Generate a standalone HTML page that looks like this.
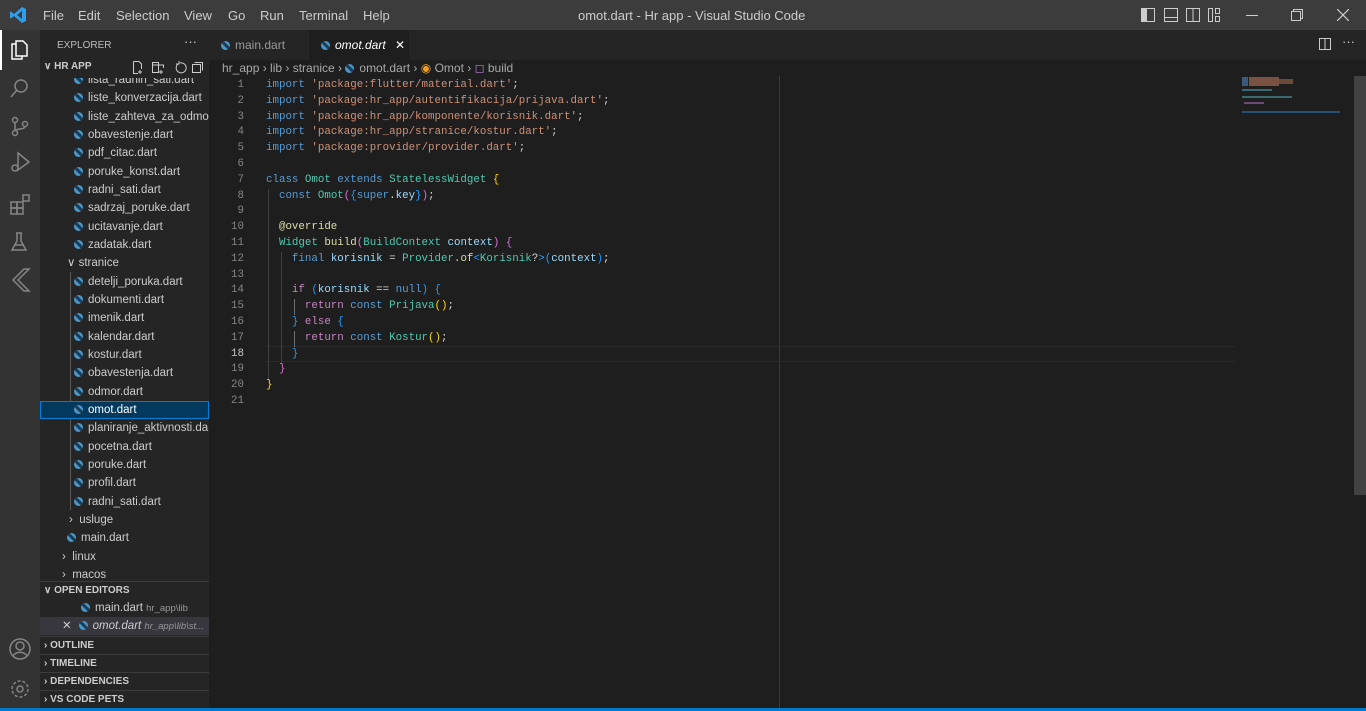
<!DOCTYPE html>
<html><head><meta charset="utf-8">
<style>
*{margin:0;padding:0;box-sizing:border-box}
body{width:1366px;height:711px;overflow:hidden;background:#1e1e1e;font-family:"Liberation Sans",sans-serif;color:#ccc;position:relative}
.abs{position:absolute}
#title{left:0;top:0;width:1366px;height:30px;background:#3c3c3c}
#title .m{position:absolute;top:8px;font-size:13px;color:#ccc}
#act{left:0;top:30px;width:40px;height:678px;background:#333}
#side{left:40px;top:30px;width:169px;height:678px;background:#252526;font-size:11.5px}
.row{position:absolute;left:0;width:169px;height:18px;line-height:18px;color:#ccc;white-space:nowrap;overflow:hidden}
.di{display:inline-block;width:9px;height:9px;border-radius:50%;background:#4b97c9;vertical-align:-1px;margin-right:5px;position:relative;overflow:hidden}
.di:after{content:"";position:absolute;left:3px;top:-2px;width:3px;height:12px;background:#1d3d55;transform:rotate(-45deg)}
.hdr{position:absolute;left:0;width:169px;height:18px;line-height:18px;font-size:10px;font-weight:bold;color:#ccc;border-top:1px solid #3c3c3c;padding-left:4px}
#tabs{left:209px;top:30px;width:1157px;height:30px;background:#252526}
.tab{position:absolute;top:0;height:30px;line-height:30px;font-size:12px;padding-left:12px}
#bc{left:209px;top:60px;width:1157px;height:16px;font-size:12px;color:#a9a9a9;line-height:16px}
#code{left:209px;top:77px;font-family:"Liberation Mono",monospace;font-size:10.8px}
.ln{position:absolute;left:0;width:35px;text-align:right;color:#858585;height:16px;line-height:16px}
.cl{position:absolute;left:57px;white-space:pre;height:16px;line-height:16px;color:#d4d4d4}
.k{color:#569cd6}.s{color:#ce9178}.t{color:#4ec9b0}.f{color:#dcdcaa}.v{color:#9cdcfe}.c{color:#c586c0}
.b1{color:#ffd700}.b2{color:#da70d6}.b3{color:#179fff}
</style></head><body>
<div id="title" class="abs">
 <svg class="abs" style="left:9px;top:6px" width="18" height="18" viewBox="0 0 18 18"><path d="M13 1 L17 3 V15 L13 17 L5 10 L2 12.5 L1 12 V6 L2 5.5 L5 8 Z M13 5 L8 9 L13 13 Z" fill="#2f9ee8"/></svg>
 <span class="m" style="left:43px">File</span><span class="m" style="left:78px">Edit</span><span class="m" style="left:116px">Selection</span><span class="m" style="left:184px">View</span><span class="m" style="left:228px">Go</span><span class="m" style="left:260px">Run</span><span class="m" style="left:299px">Terminal</span><span class="m" style="left:363px">Help</span>
 <span class="m" style="left:578px">omot.dart - Hr app - Visual Studio Code</span>
 <svg class="abs" style="left:1140px;top:8px" width="95" height="14" viewBox="0 0 95 14" fill="none" stroke="#ccc" stroke-width="1"><rect x="1.5" y="0.5" width="13" height="13"/><rect x="1.5" y="0.5" width="5" height="13" fill="#ccc"/><rect x="24.5" y="0.5" width="13" height="13"/><line x1="24" y1="9.5" x2="38" y2="9.5"/><rect x="46.5" y="0.5" width="13" height="13"/><line x1="53" y1="0" x2="53" y2="14"/><rect x="68.5" y="0.5" width="4" height="13"/><rect x="75.5" y="0.5" width="4" height="5"/><rect x="75.5" y="8.5" width="4" height="5"/></svg>
 <div class="abs" style="left:1246px;top:15px;width:12px;height:1px;background:#ccc"></div>
 <svg class="abs" style="left:1291px;top:9px" width="12" height="12" fill="none" stroke="#ccc"><rect x="0.5" y="2.5" width="9" height="9"/><path d="M2.5 2.5V0.5H11.5V9.5H9.5"/></svg>
 <svg class="abs" style="left:1337px;top:9px" width="12" height="12" stroke="#ccc" stroke-width="1.2"><path d="M0 0L12 12M12 0L0 12"/></svg>
</div>
<div id="act" class="abs">
 <div class="abs" style="left:0;top:0;width:2px;height:40px;background:#fff"></div>
 <svg class="abs" style="left:8px;top:6px" width="24" height="260" fill="none" stroke="#858585" stroke-width="1.5">
  <g stroke="#fff"><path d="M8 5H15L19 9V20H8Z"/><path d="M8 8H4V23H14V20"/></g>
  <circle cx="13" cy="50" r="6"/><path d="M9 54L3 61"/>
  <circle cx="7" cy="84" r="2.5"/><circle cx="7" cy="97" r="2.5"/><circle cx="17" cy="88" r="2.5"/><path d="M7 86.5V94.5M17 90.5C17 94 8 92 7 95"/>
  <path d="M10 117L21 126L10 134Z"/><circle cx="7" cy="132" r="3"/>
  <rect x="3" y="166" width="6" height="6"/><rect x="9" y="166" width="6" height="6"/><rect x="3" y="172" width="6" height="6"/><rect x="9" y="172" width="6" height="6"/><rect x="15" y="159" width="6" height="6"/>
  <path d="M9 197V205L4 214H18L13 205V197M8 197H14M6 209H16"/>
  <path d="M16 233L5 244L16 255H21L10 244L21 233Z M13 247L17 251"/>
 </svg>
 <svg class="abs" style="left:8px;top:608px" width="24" height="70" fill="none" stroke="#858585" stroke-width="1.5">
  <circle cx="12" cy="11" r="10"/><circle cx="12" cy="8" r="4"/><path d="M5 18C8 13 16 13 19 18"/>
  <circle cx="12" cy="51" r="3"/><circle cx="12" cy="51" r="8" stroke-dasharray="3 2"/>
 </svg>
</div>
<div id="side" class="abs">
 <div class="abs" style="left:17px;top:10px;font-size:10px;color:#bbb">EXPLORER</div>
 <div class="abs" style="left:144px;top:4px;font-size:13px;color:#ccc">···</div>
 <div class="abs" style="left:4px;top:31px;font-size:10px;font-weight:bold;color:#ccc">&#8744; HR APP</div>
 <svg class="abs" style="left:92px;top:31px" width="72" height="13" fill="none" stroke="#ccc"><path d="M1.5 0.5H7L9.5 3V8M1.5 0.5V12.5H6M8 9V13M6 11H10"/><path d="M20.5 1.5H26.5V11.5H20.5Z M20.5 4H31.5V7M29 9V13M27 11H31"/><path d="M46 3A5 5 0 1 0 48 2M47 0V3H44"/><rect x="60.5" y="3.5" width="8" height="8"/><path d="M62.5 1.5H70.5V9.5"/></svg>
 <div class="abs" style="left:0;top:48px;width:169px;height:503px;overflow:hidden">
  <div class="row" style="top:-7px;padding-left:34px"><span class="di"></span>lista_radnih_sati.dart</div>
  <div class="row" style="top:11.3px;padding-left:34px"><span class="di"></span>liste_konverzacija.dart</div>
  <div class="row" style="top:29.7px;padding-left:34px"><span class="di"></span>liste_zahteva_za_odmor...</div>
  <div class="row" style="top:48px;padding-left:34px"><span class="di"></span>obavestenje.dart</div>
  <div class="row" style="top:66.3px;padding-left:34px"><span class="di"></span>pdf_citac.dart</div>
  <div class="row" style="top:84.7px;padding-left:34px"><span class="di"></span>poruke_konst.dart</div>
  <div class="row" style="top:103px;padding-left:34px"><span class="di"></span>radni_sati.dart</div>
  <div class="row" style="top:121.3px;padding-left:34px"><span class="di"></span>sadrzaj_poruke.dart</div>
  <div class="row" style="top:139.7px;padding-left:34px"><span class="di"></span>ucitavanje.dart</div>
  <div class="row" style="top:158px;padding-left:34px"><span class="di"></span>zadatak.dart</div>
  <div class="row" style="top:176.3px;padding-left:27px">&#8744; stranice</div>
  <div class="abs" style="left:30px;top:194px;width:1px;height:238px;background:#585858"></div>
  <div class="row" style="top:194.7px;padding-left:34px"><span class="di"></span>detelji_poruka.dart</div>
  <div class="row" style="top:213px;padding-left:34px"><span class="di"></span>dokumenti.dart</div>
  <div class="row" style="top:231.3px;padding-left:34px"><span class="di"></span>imenik.dart</div>
  <div class="row" style="top:249.7px;padding-left:34px"><span class="di"></span>kalendar.dart</div>
  <div class="row" style="top:268px;padding-left:34px"><span class="di"></span>kostur.dart</div>
  <div class="row" style="top:286.3px;padding-left:34px"><span class="di"></span>obavestenja.dart</div>
  <div class="row" style="top:304.7px;padding-left:34px"><span class="di"></span>odmor.dart</div>
  <div class="row" style="top:323px;padding-left:33px;background:#04395e;border:1px solid #007fd4;line-height:16px;color:#fff"><span class="di"></span>omot.dart</div>
  <div class="row" style="top:341.3px;padding-left:34px"><span class="di"></span>planiranje_aktivnosti.dart</div>
  <div class="row" style="top:359.7px;padding-left:34px"><span class="di"></span>pocetna.dart</div>
  <div class="row" style="top:378px;padding-left:34px"><span class="di"></span>poruke.dart</div>
  <div class="row" style="top:396.3px;padding-left:34px"><span class="di"></span>profil.dart</div>
  <div class="row" style="top:414.7px;padding-left:34px"><span class="di"></span>radni_sati.dart</div>
  <div class="row" style="top:433px;padding-left:29px">&#8250;&nbsp; usluge</div>
  <div class="row" style="top:451.3px;padding-left:27px"><span class="di"></span>main.dart</div>
  <div class="row" style="top:469.7px;padding-left:22px">&#8250;&nbsp; linux</div>
  <div class="row" style="top:488px;padding-left:22px">&#8250;&nbsp; macos</div>
 </div>
 <div class="hdr" style="top:551px">&#8744; OPEN EDITORS</div>
 <div class="row" style="top:569px;padding-left:41px"><span class="di"></span>main.dart <span style="font-size:9.5px;color:#999">hr_app\lib</span></div>
 <div class="row" style="top:587px;padding-left:22px;background:#37373d"><span style="margin-right:7px">✕</span><span class="di"></span><i>omot.dart</i> <span style="font-size:9.5px;color:#999;font-style:italic">hr_app\lib\st...</span></div>
 <div class="hdr" style="top:606px">&#8250; OUTLINE</div>
 <div class="hdr" style="top:624px">&#8250; TIMELINE</div>
 <div class="hdr" style="top:642px">&#8250; DEPENDENCIES</div>
 <div class="hdr" style="top:660px">&#8250; VS CODE PETS</div>
</div>
<div id="tabs" class="abs">
 <div class="tab" style="left:0;width:100px;color:#999"><span class="di"></span>main.dart</div>
 <div class="tab" style="left:100px;width:100px;background:#1e1e1e;color:#fff;font-style:italic"><span class="di"></span>omot.dart <span style="font-style:normal;margin-left:6px">✕</span></div>
 <svg class="abs" style="left:1110px;top:8px" width="12" height="12" fill="none" stroke="#ccc"><rect x="0.5" y="0.5" width="11" height="11"/><line x1="6" y1="0" x2="6" y2="12"/></svg>
 <div class="abs" style="left:1133px;top:4px;color:#ccc;font-size:13px">···</div>
</div>
<div id="bc" class="abs">
 <span style="position:absolute;left:13px;white-space:nowrap">hr_app &#8250; lib &#8250; stranice &#8250; <span class="di"></span>omot.dart &#8250; <span style="color:#ee9d28">&#9673;</span> Omot &#8250; <span style="color:#b180d7">&#9723;</span> build</span>
</div>
<div class="abs" style="left:779px;top:76px;width:1px;height:632px;background:#3a3a3a"></div>
<div class="abs" style="left:266px;top:346px;width:969px;height:16px;border-top:1px solid #282828;border-bottom:1px solid #282828"></div>
<div class="abs" style="left:268px;top:189px;width:1px;height:190px;background:#404040"></div>
<div class="abs" style="left:281px;top:252px;width:1px;height:111px;background:#404040"></div>
<div class="abs" style="left:294px;top:299px;width:1px;height:16px;background:#707070"></div>
<div class="abs" style="left:294px;top:331px;width:1px;height:16px;background:#707070"></div>
<div id="code" class="abs">
 <div class="ln" style="top:0">1</div><div class="cl" style="top:0"><span class="k">import</span> <span class="s">'package:flutter/material.dart'</span>;</div>
 <div class="ln" style="top:15.8px">2</div><div class="cl" style="top:15.8px"><span class="k">import</span> <span class="s">'package:hr_app/autentifikacija/prijava.dart'</span>;</div>
 <div class="ln" style="top:31.6px">3</div><div class="cl" style="top:31.6px"><span class="k">import</span> <span class="s">'package:hr_app/komponente/korisnik.dart'</span>;</div>
 <div class="ln" style="top:47.4px">4</div><div class="cl" style="top:47.4px"><span class="k">import</span> <span class="s">'package:hr_app/stranice/kostur.dart'</span>;</div>
 <div class="ln" style="top:63.2px">5</div><div class="cl" style="top:63.2px"><span class="k">import</span> <span class="s">'package:provider/provider.dart'</span>;</div>
 <div class="ln" style="top:79px">6</div>
 <div class="ln" style="top:94.8px">7</div><div class="cl" style="top:94.8px"><span class="k">class</span> <span class="t">Omot</span> <span class="k">extends</span> <span class="t">StatelessWidget</span> <span class="b1">{</span></div>
 <div class="ln" style="top:110.6px">8</div><div class="cl" style="top:110.6px">  <span class="k">const</span> <span class="t">Omot</span><span class="b2">(</span><span class="b3">{</span><span class="k">super</span>.<span class="v">key</span><span class="b3">}</span><span class="b2">)</span>;</div>
 <div class="ln" style="top:126.4px">9</div>
 <div class="ln" style="top:142.2px">10</div><div class="cl" style="top:142.2px">  <span class="f">@override</span></div>
 <div class="ln" style="top:158px">11</div><div class="cl" style="top:158px">  <span class="t">Widget</span> <span class="f">build</span><span class="b2">(</span><span class="t">BuildContext</span> <span class="v">context</span><span class="b2">)</span> <span class="b2">{</span></div>
 <div class="ln" style="top:173.8px">12</div><div class="cl" style="top:173.8px">    <span class="k">final</span> <span class="v">korisnik</span> = <span class="t">Provider</span>.<span class="f">of</span><span class="b3">&lt;</span><span class="t">Korisnik</span>?<span class="b3">&gt;(</span><span class="v">context</span><span class="b3">)</span>;</div>
 <div class="ln" style="top:189.6px">13</div>
 <div class="ln" style="top:205.4px">14</div><div class="cl" style="top:205.4px">    <span class="c">if</span> <span class="b3">(</span><span class="v">korisnik</span> == <span class="k">null</span><span class="b3">)</span> <span class="b3">{</span></div>
 <div class="ln" style="top:221.2px">15</div><div class="cl" style="top:221.2px">      <span class="c">return</span> <span class="k">const</span> <span class="t">Prijava</span><span class="b1">()</span>;</div>
 <div class="ln" style="top:237px">16</div><div class="cl" style="top:237px">    <span class="b3">}</span> <span class="c">else</span> <span class="b3">{</span></div>
 <div class="ln" style="top:252.8px">17</div><div class="cl" style="top:252.8px">      <span class="c">return</span> <span class="k">const</span> <span class="t">Kostur</span><span class="b1">()</span>;</div>
 <div class="ln" style="top:268.6px;color:#c6c6c6">18</div><div class="cl" style="top:268.6px">    <span class="b3">}</span></div>
 <div class="ln" style="top:284.4px">19</div><div class="cl" style="top:284.4px">  <span class="b2">}</span></div>
 <div class="ln" style="top:300.2px">20</div><div class="cl" style="top:300.2px"><span class="b1">}</span></div>
 <div class="ln" style="top:316px">21</div>
</div>
<svg class="abs" style="left:1240px;top:76px" width="100" height="40">
 <rect x="2" y="1" width="6" height="9" fill="#3a5a80"/><rect x="9" y="1" width="30" height="9" fill="#7a5242"/><rect x="39" y="3" width="14" height="5" fill="#6a4a3a"/>
 <rect x="2" y="13" width="30" height="2" fill="#3a6a70"/><rect x="2" y="20" width="50" height="2" fill="#3a6a70"/><rect x="4" y="26" width="20" height="2" fill="#6a4a70"/><rect x="2" y="35" width="98" height="2" fill="#264f78"/>
</svg>
<div class="abs" style="left:1354px;top:76px;width:12px;height:419px;background:#424242"></div>
<div class="abs" style="left:0;top:708px;width:1366px;height:3px;background:#007acc"></div>
</body></html>
